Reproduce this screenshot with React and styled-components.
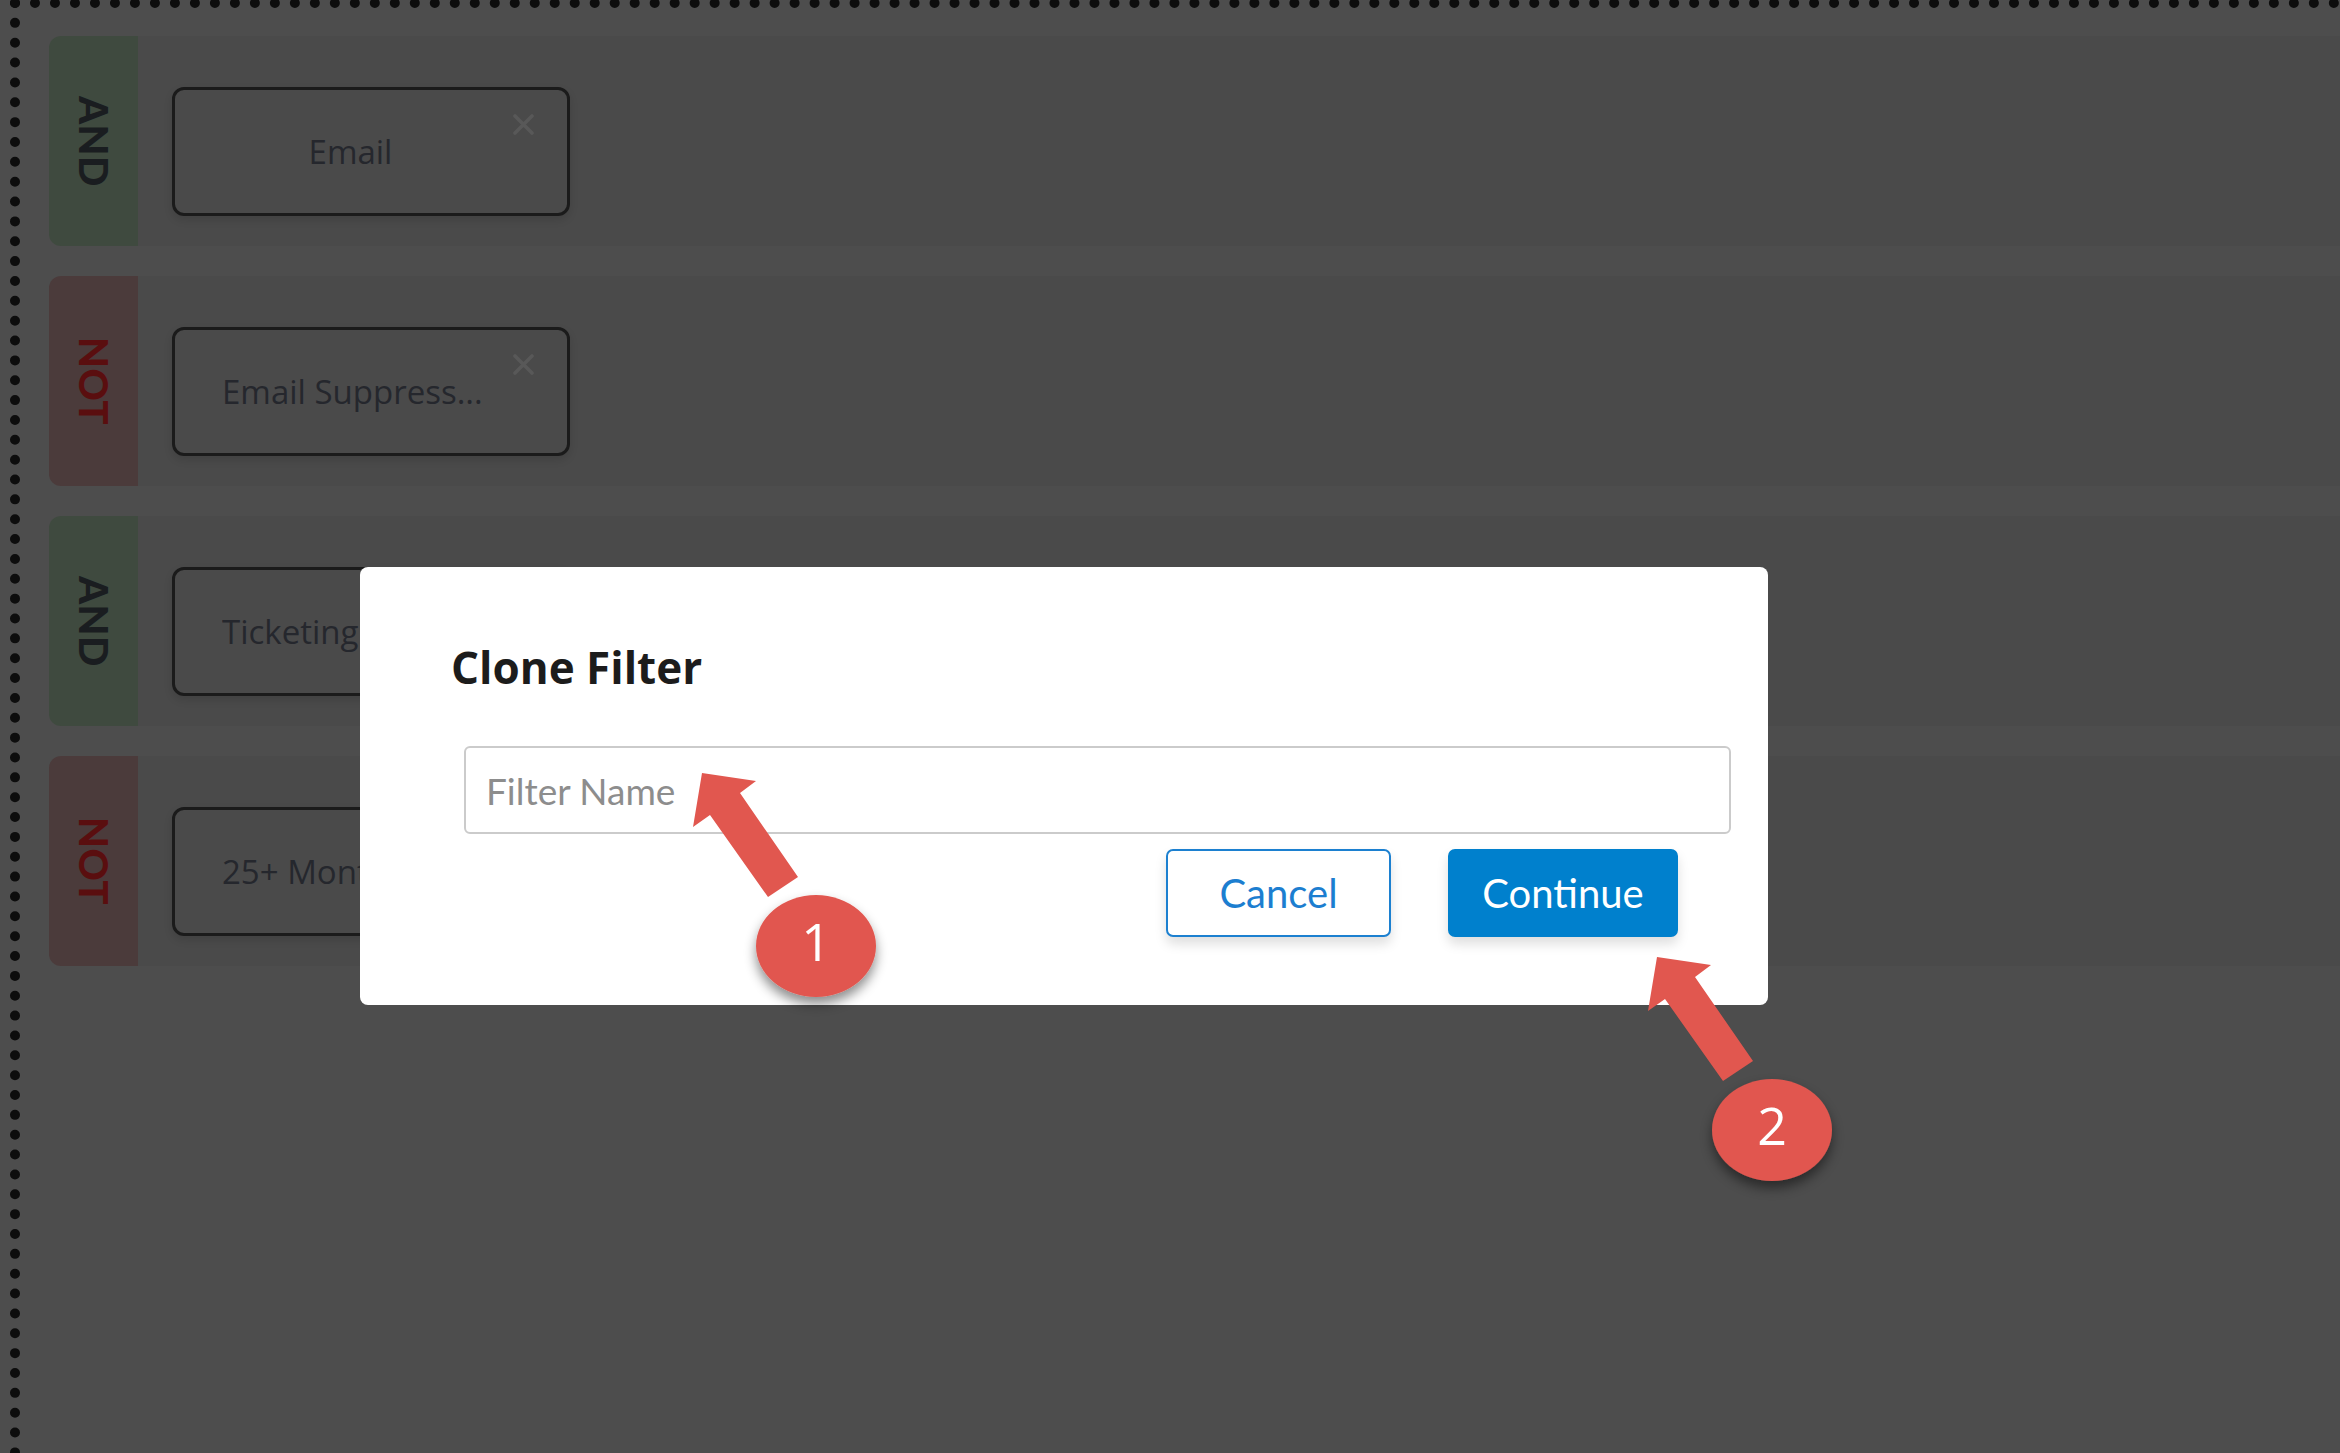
import React from "react";
import styled, { createGlobalStyle } from "styled-components";

const Global = createGlobalStyle`
  html, body { margin: 0; padding: 0; }
  body {
    background: #4d4d4d;
    font-family: "Open Sans", "Liberation Sans", sans-serif;
    overflow: hidden;
  }
  * { box-sizing: border-box; }
`;

const Frame = styled.div`
  margin: -2px 0 0 10px;
  min-height: 1480px;
  border-top: 10px dotted #0d0d0d;
  border-left: 10px dotted #0d0d0d;
  padding: 28px 0 0 29px;
  display: flex;
  flex-direction: column;
  gap: 30px;
`;

const Row = styled.div`
  display: flex;
  height: 210px;
`;

const Tab = styled.div`
  width: 89px;
  flex: none;
  border-radius: 12px 0 0 12px;
  background: ${(p) => (p.$kind === "NOT" ? "#4b3b3b" : "#3f4a3f")};
  color: ${(p) => (p.$kind === "NOT" ? "#5a0e0f" : "#1a1d20")};
  display: flex;
  align-items: center;
  justify-content: center;
  font-family: Lato, "Open Sans", sans-serif;
  font-weight: 900;
  font-size: 40px;
  line-height: 1;
  writing-mode: vertical-rl;
  letter-spacing: 0.5px;
`;

const Band = styled.div`
  flex: 1;
  background: #4a4a4a;
  padding: 51px 0 0 34px;
`;

const Card = styled.div`
  position: relative;
  width: 398px;
  height: 129px;
  border: 3px solid #1b1b1b;
  border-radius: 12px;
  padding: 0 62px 0 47px;
  display: flex;
  align-items: center;
  box-shadow: 0 4px 8px rgba(0, 0, 0, 0.12);
`;

const CardText = styled.span`
  flex: 1;
  min-width: 0;
  text-align: ${(p) => (p.$long ? "left" : "center")};
  padding-right: ${(p) => (p.$long ? "0" : "26px")};
  white-space: nowrap;
  overflow: hidden;
  text-overflow: ellipsis;
  font-family: "Open Sans", sans-serif;
  font-size: 33px;
  color: #25272d;
`;

const Close = styled.svg`
  position: absolute;
  top: 24px;
  right: 32px;
  width: 23px;
  height: 21px;
`;

const Backdrop = styled.div`
  position: fixed;
  inset: 0;
`;

const Modal = styled.div`
  margin: 567px 0 0 360px;
  width: 1408px;
  background: #ffffff;
  border-radius: 8px;
  padding: 78px 37px 68px 91px;
`;

const Title = styled.h2`
  margin: 0;
  font-family: "Open Sans", sans-serif;
  font-weight: 700;
  font-size: 44px;
  line-height: 1;
  color: #1c1c1c;
`;

const NameInput = styled.input`
  display: block;
  margin: 57px 0 0 13px;
  width: calc(100% - 13px);
  height: 88px;
  border: 2px solid #cbcbcb;
  border-radius: 6px;
  padding: 0 20px;
  font-family: Lato, "Open Sans", sans-serif;
  font-size: 37px;
  color: #333;
  outline: none;
  &::placeholder { color: #8d8d8d; }
`;

const Actions = styled.div`
  margin-top: 15px;
  padding-right: 53px;
  display: flex;
  justify-content: flex-end;
  gap: 57px;
`;

const Button = styled.button`
  height: 88px;
  width: ${(p) => (p.$primary ? "230px" : "225px")};
  border-radius: 7px;
  border: 2px solid ${(p) => (p.$primary ? "#0080cd" : "#1c80d0")};
  background: ${(p) => (p.$primary ? "#0080cd" : "#ffffff")};
  color: ${(p) => (p.$primary ? "#ffffff" : "#1c7ed0")};
  font-family: Lato, "Open Sans", sans-serif;
  font-size: 40px;
  cursor: pointer;
  box-shadow: 0 7px 12px rgba(0, 0, 0, 0.13);
`;

const Annotations = styled.svg`
  position: absolute;
  left: 0;
  top: 0;
  width: 2340px;
  height: 1453px;
  pointer-events: none;
`;

const rows = [
  { kind: "AND", text: "Email" },
  { kind: "NOT", text: "Email Suppress...", long: true },
  { kind: "AND", text: "Ticketing Purchasers", long: true },
  { kind: "NOT", text: "25+ Months Since Purchase", long: true },
];

const arrowPts = (dx, dy) =>
  [
    [702, 773],
    [756, 781],
    [740, 793],
    [798, 877],
    [768, 897],
    [710, 815],
    [693, 827],
  ]
    .map(([x, y]) => `${x + dx},${y + dy}`)
    .join(" ");

function Marker({ cx, cy, label }) {
  return (
    <g>
      <ellipse cx={cx} cy={cy} rx="60" ry="51" fill="#e1574f" filter="url(#shadow)" />
      <text
        x={cx}
        y={cy + 15}
        textAnchor="middle"
        fill="#ffffff"
        fontFamily="'Open Sans', sans-serif"
        fontSize="52"
      >
        {label}
      </text>
    </g>
  );
}

export default function App() {
  return (
    <>
      <Global />
      <Frame>
        {rows.map((r, i) => (
          <Row key={i}>
            <Tab $kind={r.kind}>{r.kind}</Tab>
            <Band>
              <Card>
                <CardText $long={r.long}>{r.text}</CardText>
                {i < 2 && (
                  <Close viewBox="0 0 23 21">
                    <path d="M3 2 L20 19 M20 2 L3 19" stroke="#585858" strokeWidth="3.6" strokeLinecap="round" />
                  </Close>
                )}
              </Card>
            </Band>
          </Row>
        ))}
      </Frame>
      <Backdrop>
        <Modal>
          <Title>Clone Filter</Title>
          <NameInput placeholder="Filter Name" />
          <Actions>
            <Button>Cancel</Button>
            <Button $primary>Continue</Button>
          </Actions>
        </Modal>
        <Annotations viewBox="0 0 2340 1453">
          <defs>
            <filter id="shadow" x="-50%" y="-50%" width="200%" height="200%">
              <feDropShadow dx="0" dy="7" stdDeviation="6" floodColor="#000" floodOpacity="0.45" />
            </filter>
          </defs>
          <polygon points={arrowPts(0, 0)} fill="#e1574f" />
          <polygon points={arrowPts(955, 184)} fill="#e1574f" />
          <Marker cx={816} cy={946} label="1" />
          <Marker cx={1772} cy={1130} label="2" />
        </Annotations>
      </Backdrop>
    </>
  );
}
